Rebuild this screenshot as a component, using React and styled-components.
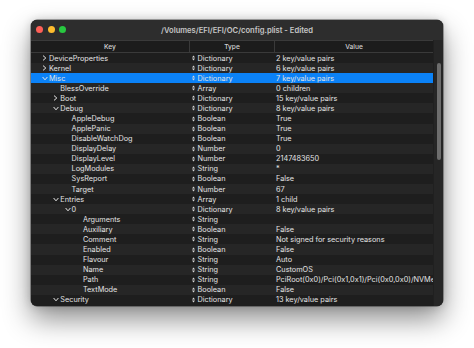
import React from 'react';
import styled, { createGlobalStyle } from 'styled-components';

const GlobalStyle = createGlobalStyle`
  html, body {
    margin: 0;
    padding: 0;
    background: #ffffff;
  }
  body {
    font-family: Inter, 'Liberation Sans', sans-serif;
  }
`;

const rows = [
  { key: 'DeviceProperties', level: 0, node: 'closed', type: 'Dictionary', value: '2 key/value pairs' },
  { key: 'Kernel', level: 0, node: 'closed', type: 'Dictionary', value: '6 key/value pairs' },
  { key: 'Misc', level: 0, node: 'open', type: 'Dictionary', value: '7 key/value pairs', selected: true },
  { key: 'BlessOverride', level: 1, type: 'Array', value: '0 children' },
  { key: 'Boot', level: 1, node: 'closed', type: 'Dictionary', value: '15 key/value pairs' },
  { key: 'Debug', level: 1, node: 'open', type: 'Dictionary', value: '8 key/value pairs' },
  { key: 'AppleDebug', level: 2, type: 'Boolean', value: 'True' },
  { key: 'ApplePanic', level: 2, type: 'Boolean', value: 'True' },
  { key: 'DisableWatchDog', level: 2, type: 'Boolean', value: 'True' },
  { key: 'DisplayDelay', level: 2, type: 'Number', value: '0' },
  { key: 'DisplayLevel', level: 2, type: 'Number', value: '2147483650' },
  { key: 'LogModules', level: 2, type: 'String', value: '*' },
  { key: 'SysReport', level: 2, type: 'Boolean', value: 'False' },
  { key: 'Target', level: 2, type: 'Number', value: '67' },
  { key: 'Entries', level: 1, node: 'open', type: 'Array', value: '1 child' },
  { key: '0', level: 2, node: 'open', type: 'Dictionary', value: '8 key/value pairs' },
  { key: 'Arguments', level: 3, type: 'String', value: '' },
  { key: 'Auxiliary', level: 3, type: 'Boolean', value: 'False' },
  { key: 'Comment', level: 3, type: 'String', value: 'Not signed for security reasons' },
  { key: 'Enabled', level: 3, type: 'Boolean', value: 'False' },
  { key: 'Flavour', level: 3, type: 'String', value: 'Auto' },
  { key: 'Name', level: 3, type: 'String', value: 'CustomOS' },
  { key: 'Path', level: 3, type: 'String', value: 'PciRoot(0x0)/Pci(0x1,0x1)/Pci(0x0,0x0)/NVMe(0x1,00-00-00-00-00-00-00-00)' },
  { key: 'TextMode', level: 3, type: 'Boolean', value: 'False' },
  { key: 'Security', level: 1, node: 'open', type: 'Dictionary', value: '13 key/value pairs' },
];

const Page = styled.div`
  padding: 20px 0 0 31px;
  height: 348px;
  box-sizing: border-box;
`;

const Window = styled.div`
  width: 412px;
  height: 286px;
  border-radius: 6px;
  overflow: hidden;
  background: #1e1e1e;
  display: flex;
  flex-direction: column;
  box-shadow: 0 13px 28px rgba(0, 0, 0, 0.45), 0 0 10px rgba(0, 0, 0, 0.18),
    0 0 0 0.5px rgba(0, 0, 0, 0.6);
`;

const TitleBar = styled.div`
  height: 20px;
  flex: none;
  position: relative;
  display: flex;
  align-items: center;
  justify-content: center;
  background: #2d2d2d;
`;

const Lights = styled.div`
  position: absolute;
  left: 5px;
  top: 6px;
  display: flex;
  gap: 4.5px;
`;

const Light = styled.span`
  width: 7px;
  height: 7px;
  border-radius: 50%;
  background: ${(p) => p.color};
`;

const Title = styled.span`
  font-size: 7.6px;
  font-weight: 600;
  color: #c6c6c6;
`;

const Body = styled.div`
  flex: 1;
  display: flex;
  min-height: 0;
`;

const Table = styled.div`
  width: 402px;
  display: flex;
  flex-direction: column;
`;

const Header = styled.div`
  height: 13px;
  flex: none;
  display: grid;
  grid-template-columns: 158px 85px 1fr;
  background: #1c1c1c;
  border-top: 1px solid #3a3a3a;
  border-bottom: 1px solid #3a3a3a;
  box-sizing: border-box;
`;

const HeadCell = styled.div`
  display: flex;
  align-items: center;
  justify-content: center;
  font-size: 6.6px;
  font-weight: 500;
  color: #d2d2d2;
  border-left: ${(p) => (p.first ? 'none' : '1px solid #3a3a3a')};
`;

const Row = styled.div`
  height: 10.08px;
  display: grid;
  grid-template-columns: 158px 85px 1fr;
  align-items: center;
  background: ${(p) => (p.selected ? '#0b82f7' : p.odd ? '#262626' : '#1e1e1e')};
  color: #e4e4e4;
  font-size: 7.3px;
  white-space: nowrap;
`;

const KeyCell = styled.div`
  display: flex;
  align-items: center;
  padding-left: ${(p) => 11 + p.level * 11.3}px;
  overflow: hidden;
`;

const Toggle = styled.span`
  width: 7px;
  flex: none;
  display: flex;
  align-items: center;
`;

const TypeCell = styled.div`
  display: flex;
  align-items: center;
  gap: 2.5px;
  padding-left: 3px;
  overflow: hidden;
`;

const ValueCell = styled.div`
  padding-left: 2px;
  overflow: hidden;
`;

const ScrollTrack = styled.div`
  flex: 1;
  background: #262626;
  border-left: 1px solid #202020;
  display: flex;
  flex-direction: column;
  padding-top: 23px;
  align-items: center;
`;

const Thumb = styled.div`
  width: 4px;
  height: 97px;
  border-radius: 2px;
  background: #6d6d6d;
`;

function Chevron({ open }) {
  return open ? (
    <svg width="6" height="5" viewBox="0 0 6 5">
      <polyline points="0.6,1 3,3.8 5.4,1" fill="none" stroke="#e6e6e6" strokeWidth="1" />
    </svg>
  ) : (
    <svg width="5" height="6" viewBox="0 0 5 6">
      <polyline points="1,0.6 3.8,3 1,5.4" fill="none" stroke="#e6e6e6" strokeWidth="1" />
    </svg>
  );
}

function Stepper() {
  return (
    <svg width="3" height="6" viewBox="0 0 3 6">
      <polygon points="0,2.4 1.5,0.6 3,2.4" fill="#d8d8d8" />
      <polygon points="0,3.6 1.5,5.4 3,3.6" fill="#d8d8d8" />
    </svg>
  );
}

export default function App() {
  return (
    <Page>
      <GlobalStyle />
      <Window>
        <TitleBar>
          <Lights>
            <Light color='#fe5f57' />
            <Light color='#febc2e' />
            <Light color='#28c840' />
          </Lights>
          <Title>/Volumes/EFI/EFI/OC/config.plist - Edited</Title>
        </TitleBar>
        <Body>
          <Table>
            <Header>
              <HeadCell first>Key</HeadCell>
              <HeadCell>Type</HeadCell>
              <HeadCell>Value</HeadCell>
            </Header>
            {rows.map((row, i) => (
              <Row key={i} odd={i % 2 === 1} selected={row.selected}>
                <KeyCell level={row.level}>
                  <Toggle>{row.node && <Chevron open={row.node === 'open'} />}</Toggle>
                  {row.key}
                </KeyCell>
                <TypeCell>
                  <Stepper />
                  {row.type}
                </TypeCell>
                <ValueCell>{row.value}</ValueCell>
              </Row>
            ))}
          </Table>
          <ScrollTrack>
            <Thumb />
          </ScrollTrack>
        </Body>
      </Window>
    </Page>
  );
}
